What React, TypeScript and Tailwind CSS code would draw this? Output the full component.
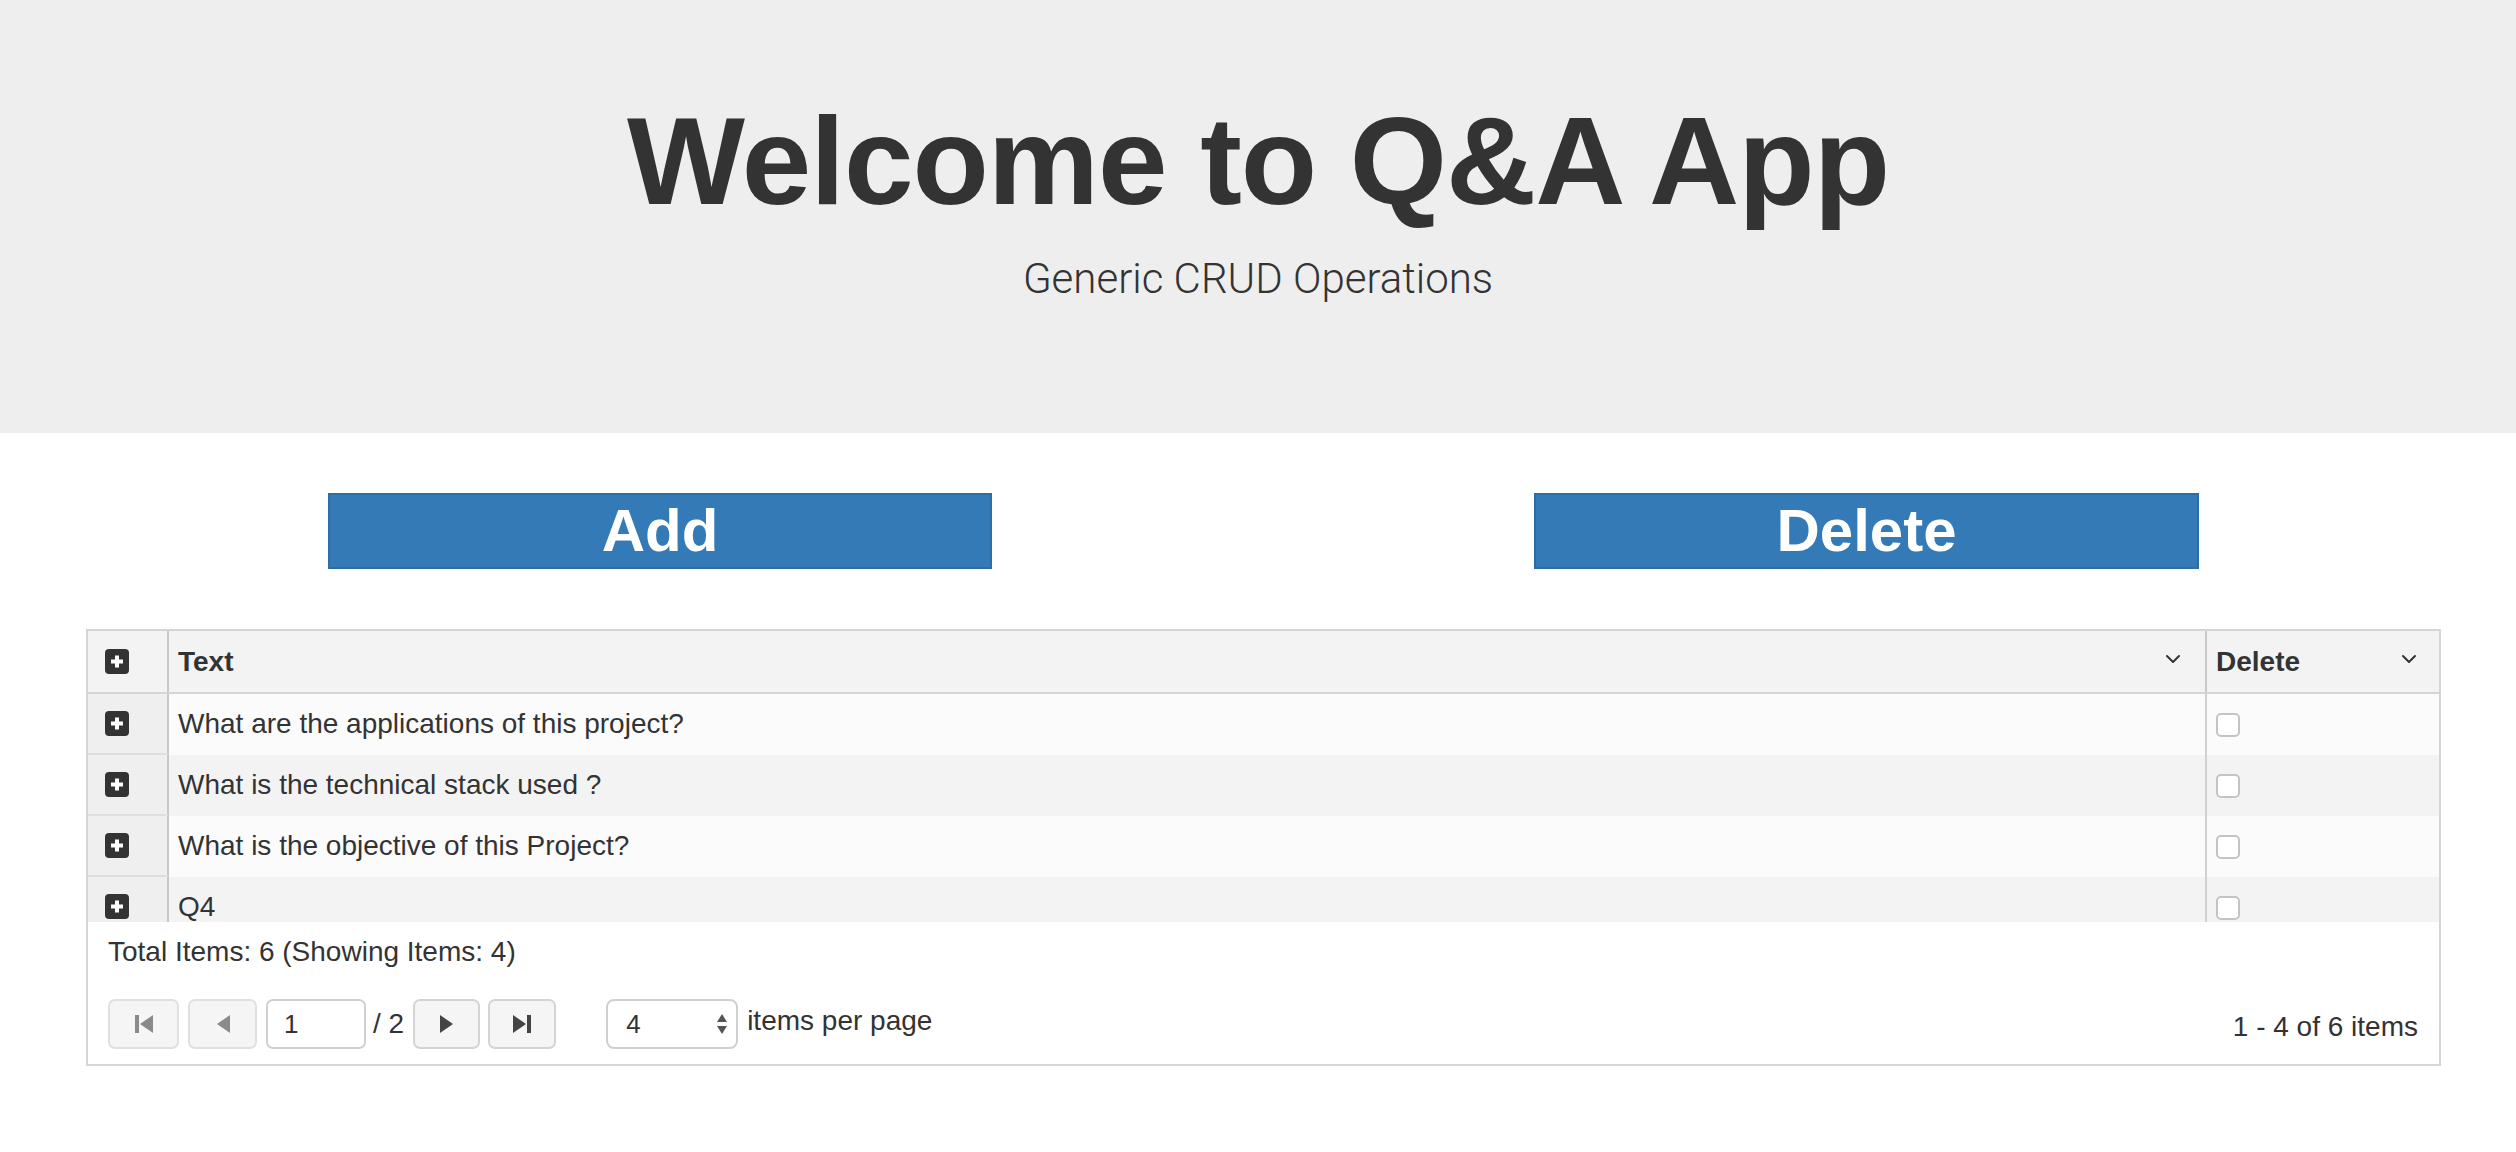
import { ChevronDown } from "lucide-react";

const questions = [
  "What are the applications of this project?",
  "What is the technical stack used ?",
  "What is the objective of this Project?",
  "Q4",
];

const PlusBox = () => (
  <svg width="24" height="25" viewBox="0 0 24 25">
    <rect x="0" y="0" width="24" height="25" rx="4" fill="#333" />
    <path d="M12 6.5v12M6 12.5h12" stroke="#fff" strokeWidth="4" />
  </svg>
);

const PagerIcon = ({ kind, color }: { kind: "first" | "prev" | "next" | "last"; color: string }) => (
  <svg width="24" height="22" viewBox="0 0 24 22">
    {kind === "first" && (
      <>
        <rect x="3" y="2" width="4" height="18" fill={color} />
        <path d="M8 11l13-9v18z" fill={color} />
      </>
    )}
    {kind === "prev" && <path d="M6 11l13-9v18z" fill={color} />}
    {kind === "next" && <path d="M18 11L5 2v18z" fill={color} />}
    {kind === "last" && (
      <>
        <path d="M16 11L3 2v18z" fill={color} />
        <rect x="17" y="2" width="4" height="18" fill={color} />
      </>
    )}
  </svg>
);

const PagerButton = ({
  kind,
  disabled,
  className,
}: {
  kind: "first" | "prev" | "next" | "last";
  disabled?: boolean;
  className: string;
}) => (
  <button
    className={`h-[50px] flex items-center justify-center rounded-[7px] border-2 bg-[#f5f5f5] ${
      disabled ? "border-[#e0e0e0]" : "border-[#d4d4d4]"
    } ${className}`}
  >
    <PagerIcon kind={kind} color={disabled ? "#8a8a8a" : "#444"} />
  </button>
);

const App = () => {
  return (
    <div className="min-h-screen bg-white text-[#333] font-['Liberation_Sans',Arial,sans-serif]">
      <div className="h-[433px] bg-[#eeeeee] pt-[92px] text-center">
        <h1 className="text-[125px] leading-[138px] font-bold tracking-[-1px]">Welcome to Q&amp;A App</h1>
        <p className="mt-[19px] text-[42px] leading-[59px] font-light font-['Roboto',sans-serif]">
          Generic CRUD Operations
        </p>
      </div>

      <div className="flex mt-[60px] ml-[328px]">
        <button className="w-[664px] h-[76px] bg-[#337ab7] border-2 border-[#2e6da4] text-white text-[60px] font-bold flex items-center justify-center">
          Add
        </button>
        <button className="ml-[542px] w-[665px] h-[76px] bg-[#337ab7] border-2 border-[#2e6da4] text-white text-[60px] font-bold flex items-center justify-center">
          Delete
        </button>
      </div>

      <div className="mt-[60px] ml-[86px] w-[2355px] border-2 border-[#d5d5d5] text-[28px]">
        <div className="flex h-[63px] bg-[#f3f3f3] border-b-2 border-[#d5d5d5]">
          <div className="w-[81px] border-r-2 border-[#c8c8c8] flex items-center pl-[17px]">
            <PlusBox />
          </div>
          <div className="flex-1 flex items-center justify-between pl-[9px] pr-[20px] font-bold">
            <span>Text</span>
            <ChevronDown className="w-[24px] h-[24px] -mt-[6px]" strokeWidth={2} />
          </div>
          <div className="w-[234px] border-l-2 border-[#c8c8c8] flex items-center justify-between pl-[9px] pr-[18px] font-bold">
            <span>Delete</span>
            <ChevronDown className="w-[24px] h-[24px] -mt-[6px]" strokeWidth={2} />
          </div>
        </div>

        <div className="h-[228px] overflow-hidden">
          {questions.map((q, i) => (
            <div
              key={q}
              className={`flex h-[61px] ${i % 2 === 0 ? "bg-[#fbfbfb]" : "bg-[#f3f3f3]"}`}
            >
              <div className="w-[81px] bg-[#efefef] border-r-2 border-b-2 border-r-[#c8c8c8] border-b-[#dedede] flex items-center pl-[17px]">
                <PlusBox />
              </div>
              <div className="flex-1 flex items-center pl-[9px] -mt-[2px]">{q}</div>
              <div className="w-[234px] border-l-2 border-[#d0d0d0] flex items-center pl-[9px]">
                <span className="w-[24px] h-[24px] rounded-[5px] border-2 border-[#c4c4c4] bg-white" />
              </div>
            </div>
          ))}
        </div>

        <div className="px-[20px] pt-[14px] pb-[15px] bg-white">
          <div className="leading-[32px]">Total Items: 6 (Showing Items: 4)</div>
          <div className="flex items-center mt-[31px]">
            <PagerButton kind="first" disabled className="w-[71px]" />
            <PagerButton kind="prev" disabled className="ml-[9px] w-[69px]" />
            <div className="ml-[9px] w-[100px] h-[50px] border-2 border-[#d0d0d0] rounded-[7px] bg-white flex items-center pl-[16px] text-[26px]">
              1
            </div>
            <span className="ml-[7px]">/ 2</span>
            <PagerButton kind="next" className="ml-[9px] w-[67px]" />
            <PagerButton kind="last" className="ml-[8px] w-[68px]" />
            <div className="ml-[50px] w-[132px] h-[50px] border-2 border-[#d0d0d0] rounded-[8px] bg-white flex items-center justify-between pl-[18px] pr-[8px] text-[26px]">
              <span>4</span>
              <svg width="12" height="22" viewBox="0 0 12 22">
                <path d="M6 1l5 8H1z" fill="#555" />
                <path d="M6 21l5-8H1z" fill="#555" />
              </svg>
            </div>
            <span className="ml-[9px] -mt-[6px]">items per page</span>
            <span className="ml-auto mr-[1px] mt-[6px]">1 - 4 of 6 items</span>
          </div>
        </div>
      </div>
    </div>
  );
};

export default App;
